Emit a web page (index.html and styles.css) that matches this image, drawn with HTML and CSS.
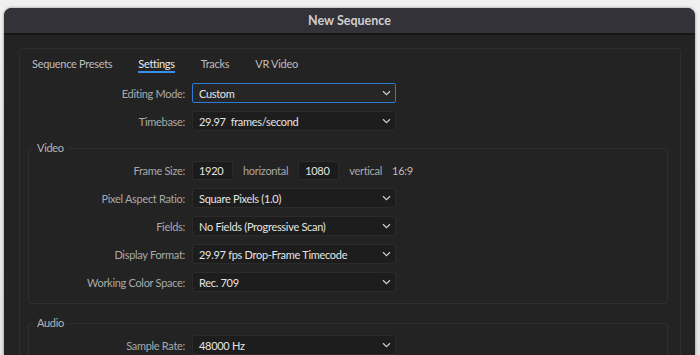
FILE: index.html
```html
<!DOCTYPE html>
<html lang="en">

<head>
  <meta charset="UTF-8">
  <meta name="viewport" content="width=device-width, initial-scale=1.0">
  <title>New Sequence</title>
  <link rel="stylesheet" href="styles.css">
</head>

<body>
  <div class="window">
    <div class="titlebar">New Sequence</div>
    <div class="content">
      <div class="panel">
        <div class="tabs">
          <span class="tab">Sequence Presets</span>
          <span class="tab active">Settings</span>
          <span class="tab">Tracks</span>
          <span class="tab">VR Video</span>
        </div>

        <div class="rows top_rows">
          <div class="row">
            <label>Editing Mode:</label>
            <div class="select focus"><span>Custom</span>
              <svg width="9" height="6" viewBox="0 0 9 6"><path d="M1 1.2 L4.5 4.6 L8 1.2" /></svg>
            </div>
          </div>
          <div class="row">
            <label>Timebase:</label>
            <div class="select"><span>29.97&nbsp; frames/second</span>
              <svg width="9" height="6" viewBox="0 0 9 6"><path d="M1 1.2 L4.5 4.6 L8 1.2" /></svg>
            </div>
          </div>
        </div>

        <fieldset class="group">
          <legend>Video</legend>
          <div class="rows">
            <div class="row">
              <label>Frame Size:</label>
              <div class="field">1920</div>
              <span class="unit">horizontal</span>
              <div class="field">1080</div>
              <span class="unit">vertical</span>
              <span class="ratio">16:9</span>
            </div>
            <div class="row">
              <label>Pixel Aspect Ratio:</label>
              <div class="select"><span>Square Pixels (1.0)</span>
                <svg width="9" height="6" viewBox="0 0 9 6"><path d="M1 1.2 L4.5 4.6 L8 1.2" /></svg>
              </div>
            </div>
            <div class="row">
              <label>Fields:</label>
              <div class="select"><span>No Fields (Progressive Scan)</span>
                <svg width="9" height="6" viewBox="0 0 9 6"><path d="M1 1.2 L4.5 4.6 L8 1.2" /></svg>
              </div>
            </div>
            <div class="row">
              <label>Display Format:</label>
              <div class="select"><span>29.97 fps Drop-Frame Timecode</span>
                <svg width="9" height="6" viewBox="0 0 9 6"><path d="M1 1.2 L4.5 4.6 L8 1.2" /></svg>
              </div>
            </div>
            <div class="row">
              <label>Working Color Space:</label>
              <div class="select"><span>Rec. 709</span>
                <svg width="9" height="6" viewBox="0 0 9 6"><path d="M1 1.2 L4.5 4.6 L8 1.2" /></svg>
              </div>
            </div>
          </div>
        </fieldset>

        <fieldset class="group">
          <legend>Audio</legend>
          <div class="rows">
            <div class="row">
              <label>Sample Rate:</label>
              <div class="select"><span>48000 Hz</span>
                <svg width="9" height="6" viewBox="0 0 9 6"><path d="M1 1.2 L4.5 4.6 L8 1.2" /></svg>
              </div>
            </div>
          </div>
        </fieldset>
      </div>
    </div>
  </div>
</body>

</html>
```

FILE: styles.css
```css
html {
  overflow: hidden;
}

body {
  margin: 0;
  padding: 8px 5px 0 4px;
  background: linear-gradient(#f0f0f0, #e2e2e2);
  font-family: Lato, "Open Sans", sans-serif;
  font-size: 11px;
  letter-spacing: -0.3px;
}

.window {
  height: 420px;
  background-color: #232323;
  border-radius: 8px 8px 0 0;
  box-shadow: 0 0 3px rgba(0, 0, 0, 0.45);
  overflow: hidden;
}

.titlebar {
  height: 25px;
  line-height: 25px;
  text-align: center;
  background-color: #333238;
  border-bottom: 2px solid #161616;
  color: #cfcfcf;
  font-weight: bold;
  font-size: 12.5px;
  letter-spacing: 0;
}

.content {
  padding: 13px 14px 0 15px;
}

.panel {
  border: 1px solid #2e2e2e;
  border-radius: 3px;
  height: 400px;
}

/* tabs */
.tabs {
  display: flex;
  gap: 26px;
  padding: 8px 0 0 12px;
}

.tab {
  line-height: 14px;
  padding-bottom: 0;
  border-bottom: 2px solid transparent;
  color: #bdbdbd;
}

.tab.active {
  color: #ececec;
  border-bottom-color: #3a8de6;
}

/* form rows */
.rows {
  display: flex;
  flex-direction: column;
  gap: 8px;
}

.top_rows {
  margin-top: 10px;
}

.row {
  display: flex;
  align-items: center;
  height: 20px;
}

.row label {
  width: 165px;
  margin-right: 7px;
  text-align: right;
  color: #a9a9a9;
  white-space: nowrap;
}

.group .row label {
  width: 156px;
}

.select {
  box-sizing: border-box;
  width: 204px;
  height: 20px;
  display: flex;
  align-items: center;
  justify-content: space-between;
  padding: 0 4px 0 6px;
  background-color: #1d1d1d;
  border: 1px solid #2b2b2b;
  border-radius: 2px;
  color: #e4e4e4;
}

.select.focus {
  background-color: #262626;
  border: 1.5px solid #2f7bd3;
}

.select svg path {
  fill: none;
  stroke: #cfcfcf;
  stroke-width: 1.2;
}

.field {
  box-sizing: border-box;
  width: 41px;
  height: 19px;
  line-height: 17px;
  padding-left: 6px;
  background-color: #1b1b1b;
  border: 1px solid #2b2b2b;
  border-radius: 2px;
  color: #e4e4e4;
}

.unit {
  color: #a9a9a9;
  margin: 0 10px;
}

.ratio {
  color: #bcbcbc;
}

/* group boxes */
.group {
  margin: 10px 12px 0 8px;
  padding: 5px 0 11px 0;
  border: 1px solid #2f2f2f;
  border-radius: 3px;
}

.group legend {
  margin-left: 4px;
  padding: 0 4px;
  line-height: 14px;
  color: #b5b5b5;
}

.group + .group {
  margin-top: 12px;
}
```
